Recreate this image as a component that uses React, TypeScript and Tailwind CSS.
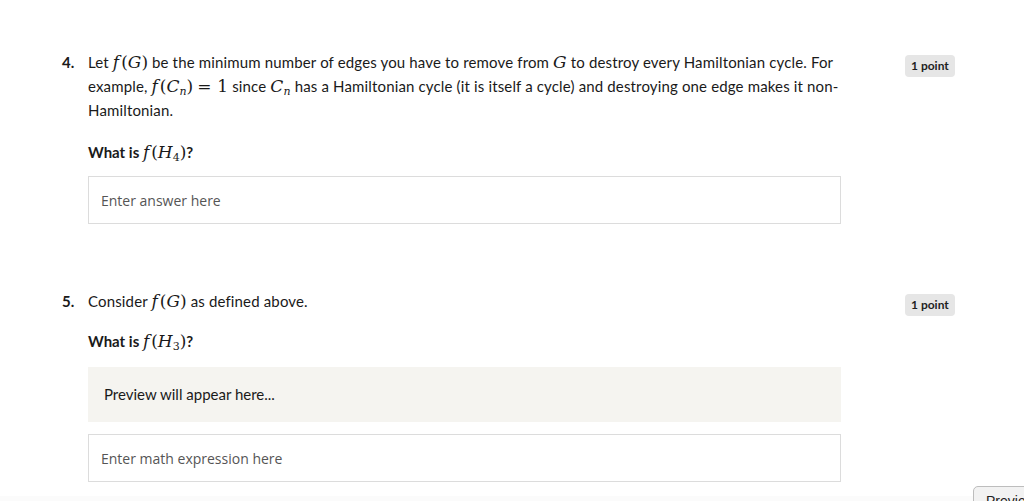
import React from 'react'

const serif = "font-['DejaVu_Serif','Liberation_Serif',serif]"

function M({ fn = 'f', arg, sub, subUpright }: { fn?: string; arg: string; sub?: string; subUpright?: boolean }) {
  return (
    <span className={`${serif} text-[17px] whitespace-nowrap tracking-normal`}>
      <i className="mr-[2px]">{fn}</i>
      <span>(</span>
      <i>{arg}</i>
      {sub && <sub className={`text-[11px] ${subUpright ? '' : 'italic'}`}>{sub}</sub>}
      <span>)</span>
    </span>
  )
}

function Badge() {
  return (
    <div className="shrink-0 mt-[5px] h-[22px] px-[6px] rounded-[4px] bg-[#e6e6e6] flex items-center text-[12px] font-bold text-[#1f1f1f]">
      1 point
    </div>
  )
}

function TextInput({ placeholder }: { placeholder: string }) {
  return (
    <input
      placeholder={placeholder}
      className="block w-full h-[48px] px-3 border border-[#dcdcdc] bg-white text-[14px] font-['Open_Sans',sans-serif] text-[#333] placeholder:text-[#555] outline-none"
    />
  )
}

export default function App() {
  return (
    <div className="relative w-[1024px] h-[501px] overflow-hidden bg-white text-[#1a1a1a] font-['Lato',sans-serif] text-[15px]">
      <div className="pl-[62px] pt-[50px]">
        <div className="flex">
          <div className="w-[26px] shrink-0 font-bold leading-[24px]">4.</div>
          <div className="w-[753px] shrink-0">
            <div className="leading-[24px] whitespace-nowrap tracking-[0.15px]">
              <div>
                Let <M arg="G" /> be the minimum number of edges you have to remove from{' '}
                <i className={`${serif} text-[17px]`}>G</i> to destroy every Hamiltonian cycle. For
              </div>
              <div>
                example, <M arg="C" sub="n" /> <span className={`${serif} text-[17px]`}>= 1</span> since{' '}
                <span className={`${serif} text-[17px]`}><i>C</i><sub className="text-[11px] italic">n</sub></span> has a
                Hamiltonian cycle (it is itself a cycle) and destroying one edge makes it non-
              </div>
              <div>Hamiltonian.</div>
            </div>
            <p className="mt-[18px] leading-[24px] font-bold">
              What is <span className="font-normal"><M arg="H" sub="4" subUpright /></span>?
            </p>
            <div className="mt-[12px]">
              <TextInput placeholder="Enter answer here" />
            </div>
          </div>
          <div className="ml-[64px]">
            <Badge />
          </div>
        </div>

        <div className="flex mt-[65px]">
          <div className="w-[26px] shrink-0 font-bold leading-[24px]">5.</div>
          <div className="w-[753px] shrink-0">
            <p className="leading-[24px] tracking-[0.15px]">
              Consider <M arg="G" /> as defined above.
            </p>
            <p className="mt-[16px] leading-[24px] font-bold">
              What is <span className="font-normal"><M arg="H" sub="3" subUpright /></span>?
            </p>
            <div className="mt-[14px] h-[55px] bg-[#f5f4f0] flex items-center px-4">
              Preview will appear here...
            </div>
            <div className="mt-[12px]">
              <TextInput placeholder="Enter math expression here" />
            </div>
          </div>
          <div className="ml-[64px]">
            <Badge />
          </div>
        </div>
      </div>

      <div className="absolute left-0 right-0 bottom-0 h-[5px] bg-[#fbfbfb]" />
      <div className="absolute left-[973px] top-[486px] w-[80px] h-[30px] rounded-[5px] border border-[#bdbdbd] bg-[#f2f2f2] pl-[12px] pt-[4px] text-[14px] text-[#222] font-['Liberation_Sans',sans-serif]">
        Preview
      </div>
    </div>
  )
}
